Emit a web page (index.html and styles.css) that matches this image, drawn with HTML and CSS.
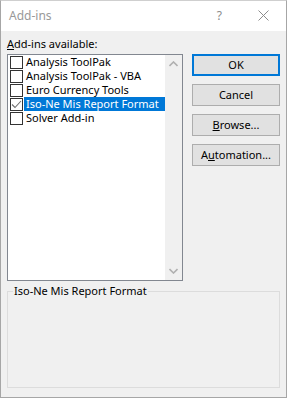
FILE: index.html
```html
<!DOCTYPE html>
<html>
<head>
<meta charset="utf-8">
<link rel="stylesheet" href="styles.css">
</head>
<body>
<div class="window">
  <div class="titlebar">
    <span class="title">Add-ins</span>
    <span class="help">?</span>
    <svg class="close" width="11" height="11" viewBox="0 0 11 11"><path d="M0.5 0.5 L10.5 10.5 M10.5 0.5 L0.5 10.5" stroke="#8c8c8c" stroke-width="1" fill="none"/></svg>
  </div>
  <div class="content">
    <div class="label"><u>A</u>dd-ins available:</div>
    <div class="main">
      <div class="list">
        <div class="items">
          <div class="row"><span class="box"></span><span class="text">Analysis ToolPak</span></div>
          <div class="row"><span class="box"></span><span class="text">Analysis ToolPak - VBA</span></div>
          <div class="row"><span class="box"></span><span class="text">Euro Currency Tools</span></div>
          <div class="row"><span class="box"><svg width="11" height="11" viewBox="0 0 11 11"><path d="M1 5.5 L4 8.5 L10 2" stroke="#6f6f6f" stroke-width="1.1" fill="none"/></svg></span><span class="text selected">Iso-Ne Mis Report Format</span></div>
          <div class="row"><span class="box"></span><span class="text">Solver Add-in</span></div>
        </div>
        <div class="scrollbar">
          <svg width="9" height="6" viewBox="0 0 9 6"><path d="M0.5 5 L4.5 1 L8.5 5" stroke="#b0b0b0" stroke-width="1.6" fill="none"/></svg>
          <svg width="9" height="6" viewBox="0 0 9 6"><path d="M0.5 1 L4.5 5 L8.5 1" stroke="#b0b0b0" stroke-width="1.6" fill="none"/></svg>
        </div>
      </div>
      <div class="buttons">
        <div class="btn default">OK</div>
        <div class="btn">Cancel</div>
        <div class="btn"><u>B</u>rowse...</div>
        <div class="btn">A<u>u</u>tomation...</div>
      </div>
    </div>
    <fieldset class="group">
      <legend>Iso-Ne Mis Report Format</legend>
    </fieldset>
  </div>
</div>
</body>
</html>
```
FILE: styles.css
```css
* { box-sizing: border-box; }
html, body { margin: 0; padding: 0; }
body {
  width: 287px;
  height: 398px;
  font-family: "Noto Sans", "Open Sans", sans-serif;
  font-size: 11px;
  color: #000;
  background: #f0f0f0;
}
.window {
  width: 287px;
  height: 398px;
  border: 1px solid #a6a6a6;
  border-top-color: #cfcfcf;
  display: flex;
  flex-direction: column;
}
.titlebar {
  height: 30px;
  background: #fff;
  display: flex;
  align-items: center;
}
.title {
  margin-left: 8px;
  color: #999;
  font-size: 12px;
  line-height: 16px;
  margin-top: -1px;
}
.help {
  margin-left: auto;
  color: #8c8c8c;
  font-size: 12px;
  line-height: 16px;
  margin-right: 36px;
  margin-top: -1px;
}
.close {
  margin-right: 17px;
  margin-top: -2px;
}
.content {
  flex: 1;
  background: #f0f0f0;
  padding: 5px 6px 9px 6px;
  display: flex;
  flex-direction: column;
}
.label {
  height: 16px;
  line-height: 16px;
  margin-bottom: 2px;
}
.main {
  display: flex;
  gap: 9px;
}
.list {
  width: 176px;
  height: 227px;
  background: #fff;
  border: 1px solid #828790;
  display: flex;
}
.items {
  flex: 1;
  min-width: 0;
}
.row {
  display: flex;
  align-items: flex-start;
  height: 14px;
}
.box {
  width: 13px;
  height: 13px;
  margin-left: 2px;
  margin-top: 1px;
  border: 1px solid #333;
  background: #fff;
  display: flex;
  align-items: center;
  justify-content: center;
  flex: none;
}
.text {
  flex: 1;
  margin-left: 1px;
  padding-left: 2px;
  height: 14px;
  line-height: 14px;
  white-space: nowrap;
  overflow: hidden;
}
.text.selected {
  background: #0078d7;
  color: #fff;
}
.scrollbar {
  width: 17px;
  flex: none;
  background: #f0f0f0;
  display: flex;
  flex-direction: column;
  justify-content: space-between;
  align-items: center;
  padding: 6px 0 6px 0;
}
.buttons {
  display: flex;
  flex-direction: column;
  gap: 8px;
}
.btn {
  width: 88px;
  height: 22px;
  background: #e1e1e1;
  border: 1px solid #adadad;
  display: flex;
  align-items: center;
  justify-content: center;
  line-height: 14px;
}
.btn.default {
  border: 2px solid #0078d7;
}
.group {
  margin: 2px 0 0 0;
  padding: 0;
  width: 273px;
  height: 105px;
  border: 1px solid #dcdcdc;
  min-width: 0;
}
.group legend {
  margin-left: 5px;
  padding: 0 1px;
  line-height: 16px;
  height: 16px;
}
```
